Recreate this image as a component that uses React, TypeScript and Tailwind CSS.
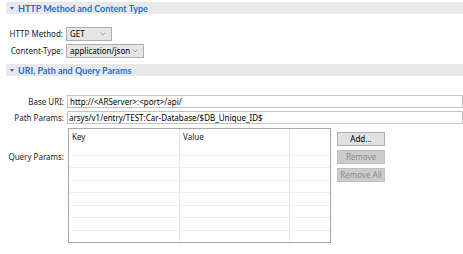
import { ChevronDown } from "lucide-react";

function SectionHeader({ title }: { title: string }) {
  return (
    <div className="ml-[6px] h-[12px] bg-[#e9e9e9] flex items-center">
      <span className="ml-[4px] w-0 h-0 border-l-[2.5px] border-r-[2.5px] border-t-[3px] border-l-transparent border-r-transparent border-t-[#1f6fd1]" />
      <span className="ml-[4px] text-[9px] font-bold text-[#1f6fd1] leading-none" style={{ fontFamily: "Lato, 'Noto Sans', sans-serif" }}>
        {title}
      </span>
    </div>
  );
}

function Select({ value, width }: { value: string; width: string }) {
  return (
    <div className={`${width} h-[14px] bg-[#e6e6e6] border border-[#adadad] flex items-center justify-between pl-[3px] pr-[4px]`}>
      <span className="text-[8px] text-black leading-none">{value}</span>
      <ChevronDown size={8} strokeWidth={1.5} className="text-[#555]" />
    </div>
  );
}

function Btn({ label, disabled }: { label: string; disabled?: boolean }) {
  return (
    <div
      className={
        disabled
          ? "w-[48px] h-[14px] bg-[#cccccc] border border-[#bfbfbf] flex items-center justify-center text-[8px] text-[#8f8f8f] leading-none"
          : "w-[48px] h-[14px] bg-[#e1e1e1] border border-[#adadad] flex items-center justify-center text-[8px] text-black leading-none"
      }
    >
      {label}
    </div>
  );
}

export default function App() {
  const rows = [0, 1, 2, 3, 4, 5, 6];
  return (
    <div className="w-[463px] h-[254px] bg-white overflow-hidden pt-[2px] text-[#222]" style={{ fontFamily: "'Noto Sans', 'Open Sans', sans-serif" }}>
      <SectionHeader title="HTTP Method and Content Type" />

      {/* method / content type */}
      <div className="mt-[13px] flex flex-col gap-[3px]">
        <div className="flex items-center">
          <span className="w-[63px] text-right text-[8px] leading-none">HTTP Method:</span>
          <div className="ml-[3px]"><Select value="GET" width="w-[46px]" /></div>
        </div>
        <div className="flex items-center">
          <span className="w-[63px] text-right text-[8px] leading-none">Content-Type:</span>
          <div className="ml-[3px]"><Select value="application/json" width="w-[78px]" /></div>
        </div>
      </div>

      <div className="mt-[6px]">
        <SectionHeader title="URI, Path and Query Params" />
      </div>

      {/* uri / path */}
      <div className="mt-[19px] flex flex-col gap-[3px]">
        <div className="flex items-center">
          <span className="w-[64px] text-right text-[8px] leading-none">Base URI:</span>
          <div className="ml-[3px] flex-1 h-[13px] border border-[#c4c4c4] flex items-center px-[2px] text-[8px] text-black leading-none">
            {"http://<ARServer>:<port>/api/"}
          </div>
        </div>
        <div className="flex items-center">
          <span className="w-[64px] text-right text-[8px] leading-none">Path Params:</span>
          <div className="ml-[3px] flex-1 h-[13px] border border-[#c4c4c4] flex items-center px-[1px] text-[8px] text-black leading-none">
            arsys/v1/entry/TEST:Car-Database/$DB_Unique_ID$
          </div>
        </div>
      </div>

      {/* query params */}
      <div className="mt-[4px] flex">
        <div className="w-[64px] flex items-center justify-end h-[58px] text-[8px] leading-none">Query Params:</div>
        <div className="ml-[4px] w-[263px] h-[115px] border border-[#a8a8a8] flex flex-col">
          <div className="h-[27px] flex border-b border-[#ededf3]">
            <div className="w-[111px] border-r border-[#e8e8f3] pl-[3px] pt-[4px] text-[8px] leading-none">Key</div>
            <div className="w-[110px] border-r border-[#e8e8f3] pl-[3px] pt-[4px] text-[8px] leading-none">Value</div>
            <div className="flex-1" />
          </div>
          {rows.map((r) => (
            <div key={r} className="flex-1 flex border-b border-[#ededf3] last:border-b-0">
              <div className="w-[111px] border-r border-[#e8e8f3]" />
              <div className="w-[110px] border-r border-[#e8e8f3]" />
              <div className="flex-1" />
            </div>
          ))}
        </div>
        <div className="ml-[6px] mt-[4px] flex flex-col gap-[4px]">
          <Btn label="Add..." />
          <Btn label="Remove" disabled />
          <Btn label="Remove All" disabled />
        </div>
      </div>
    </div>
  );
}
